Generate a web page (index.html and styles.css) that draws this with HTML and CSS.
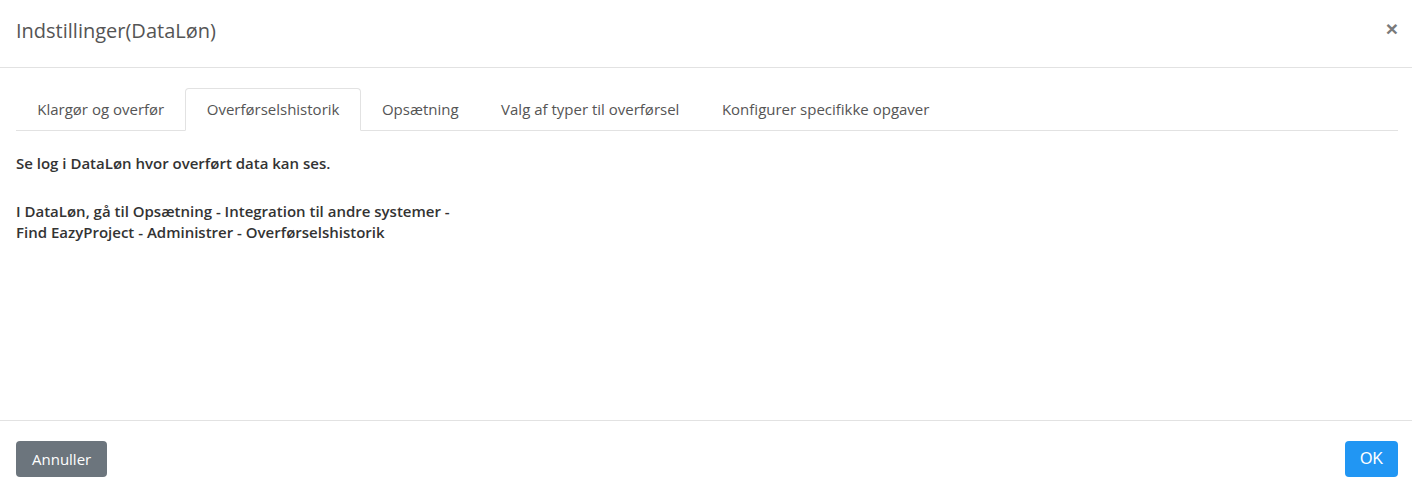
FILE: index.html
```html
<!DOCTYPE html>
<html lang="da">
<head>
<meta charset="utf-8">
<title>Indstillinger(DataLøn)</title>
<link rel="stylesheet" href="styles.css">
</head>
<body>
<div class="modal">
  <div class="modal-header">
    <h4 class="modal-title">Indstillinger(DataLøn)</h4>
    <button class="close" type="button">×</button>
  </div>
  <div class="modal-body">
    <ul class="nav-tabs">
      <li class="nav-link">Klargør og overfør</li>
      <li class="nav-link active">Overførselshistorik</li>
      <li class="nav-link">Opsætning</li>
      <li class="nav-link">Valg af typer til overførsel</li>
      <li class="nav-link">Konfigurer specifikke opgaver</li>
    </ul>
    <div class="tab-content">
      <p class="lead-line">Se log i DataLøn hvor overført data kan ses.</p>
      <p>I DataLøn, gå til Opsætning - Integration til andre systemer -<br>Find EazyProject - Administrer - Overførselshistorik</p>
    </div>
  </div>
  <div class="modal-footer">
    <button class="btn btn-secondary" type="button">Annuller</button>
    <button class="btn btn-primary" type="button">OK</button>
  </div>
</div>
</body>
</html>
```
FILE: styles.css
```css
* { box-sizing: border-box; }
html, body { margin: 0; padding: 0; background: #fff; }
body {
  font-family: "Open Sans", "Liberation Sans", sans-serif;
  color: #333;
  width: 1412px;
  height: 493px;
  overflow: hidden;
}
.modal {
  display: flex;
  flex-direction: column;
  height: 493px;
}
.modal-header {
  height: 68px;
  display: flex;
  align-items: center;
  justify-content: space-between;
  padding: 0 16px;
  border-bottom: 1px solid #e2e2e2;
}
.modal-title {
  margin: 0;
  font-size: 20px;
  font-weight: 400;
  color: #555;
  line-height: 24px;
  padding-bottom: 6px;
}
.close {
  border: 0;
  background: transparent;
  font-family: "Liberation Sans", Arial, sans-serif;
  font-size: 21px;
  font-weight: 700;
  color: #7a7a7a;
  padding: 0;
  margin-right: -2px;
  line-height: 1;
  padding-bottom: 10px;
}
.modal-body {
  flex: 1;
  padding: 20px 14px 0 16px;
}
.nav-tabs {
  list-style: none;
  margin: 0;
  padding: 0;
  display: flex;
  border-bottom: 1px solid #e2e2e2;
}
.nav-link {
  padding: 10px 20.25px;
  font-size: 15px;
  line-height: 21px;
  color: #555;
  border: 1px solid transparent;
  border-top-left-radius: 4px;
  border-top-right-radius: 4px;
  margin-bottom: -1px;
}
.nav-link.active {
  border-color: #e2e2e2 #e2e2e2 #fff;
  background: #fff;
}
.tab-content {
  padding-top: 22px;
  font-size: 15px;
  font-weight: 600;
  line-height: 21px;
  color: #333;
}
.tab-content p { margin: 0; }
.tab-content .lead-line { margin-bottom: 27px; }
.modal-footer {
  height: 73px;
  border-top: 1px solid #e2e2e2;
  display: flex;
  align-items: flex-start;
  justify-content: space-between;
  padding: 20px 14px 0 16px;
}
.btn {
  height: 36px;
  border: 0;
  border-radius: 4px;
  color: #fff;
  font-size: 15px;
  line-height: 36px;
  padding: 0 16px;
}
.btn-secondary {
  background: #6c757d;
  font-family: "Open Sans", sans-serif;
  width: 91px;
}
.btn-primary {
  background: #2196f3;
  font-family: "Liberation Sans", Arial, sans-serif;
  font-size: 16px;
  width: 53px;
  padding: 0;
}
```
